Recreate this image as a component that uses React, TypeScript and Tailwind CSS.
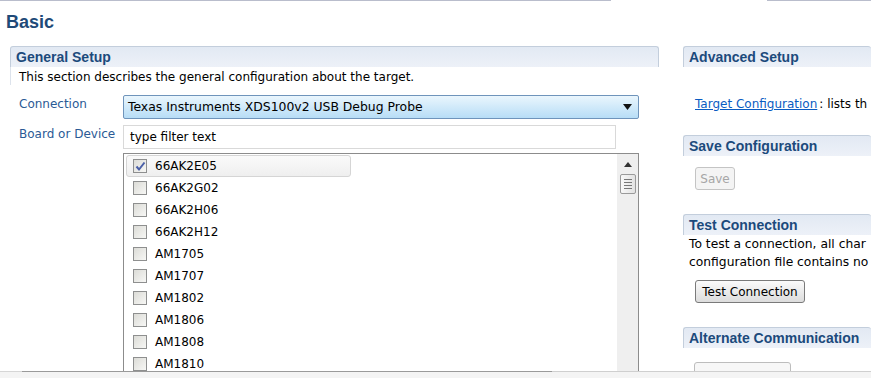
const DEVICES = [
  '66AK2E05',
  '66AK2G02',
  '66AK2H06',
  '66AK2H12',
  'AM1705',
  'AM1707',
  'AM1802',
  'AM1806',
  'AM1808',
  'AM1810',
]

const BODY = { fontFamily: '"DejaVu Sans", Verdana, sans-serif' }
const HEAD = { fontFamily: '"Liberation Sans", Arial, sans-serif' }

function SectionHeader({ title, wide }: { title: string; wide?: boolean }) {
  return (
    <div
      style={HEAD}
      className={
        'h-[21px] rounded-t-[3px] border border-b-0 border-[#c3cedc] bg-gradient-to-b from-[#e2e9f3] to-[#edf1f8] pl-[5px] text-[14px] font-bold leading-[21px] text-[#1c4a7c]' +
        (wide ? '' : ' border-r-0')
      }
    >
      {title}
    </div>
  )
}

function Checkbox({ checked }: { checked?: boolean }) {
  return (
    <span className="flex h-[14px] w-[14px] shrink-0 items-center justify-center border border-[#8e8f8f] bg-gradient-to-br from-[#dcdcd7] to-[#f7f7f5]">
      {checked && (
        <svg width="11" height="11" viewBox="0 0 11 11">
          <path d="M1.5 5.5 L4 8.5 L9.5 1.5" fill="none" stroke="#4a5fa7" strokeWidth="2" />
        </svg>
      )}
    </span>
  )
}

export default function App() {
  return (
    <div className="relative h-[378px] w-[871px] overflow-hidden bg-white text-[12px] text-black" style={BODY}>
      <div className="flex h-px">
        <div className="w-[611px] bg-[#b9bdcc]" />
        <div className="w-[156px]" />
        <div className="flex-1 bg-[#b9bdcc]" />
      </div>
      <div className="pl-[6px] pt-[10px] text-[18px] font-bold leading-[22px] text-[#1f4a78]" style={HEAD}>
        Basic
      </div>

      <div className="mt-[13px] flex">
        {/* left column */}
        <div className="ml-[10px] w-[649px]">
          <SectionHeader title="General Setup" wide />
          <div className="border-l border-[#dde3ec] pl-[8px] pt-[2px] leading-[16px]">
            This section describes the general configuration about the target.
          </div>
          <div className="mt-[10px] flex items-start pl-[9px]">
            <div className="w-[104px] pt-[1px] leading-[16px] text-[#2b5a95]">Connection</div>
            <div className="flex h-[24px] w-[516px] items-center justify-between rounded-[2px] border border-[#6f94bb] bg-gradient-to-b from-[#eaf6fd] to-[#b7ddf6] pl-[4px] pr-[6px] text-[12.4px]">
              <span>Texas Instruments XDS100v2 USB Debug Probe</span>
              <svg width="9" height="6" viewBox="0 0 9 6">
                <path d="M0 0 H9 L4.5 6 Z" fill="#111" />
              </svg>
            </div>
          </div>
          <div className="mt-[6px] flex items-start pl-[9px]">
            <div className="w-[104px] pt-[1px] leading-[16px] text-[#2b5a95]">Board or Device</div>
            <div className="flex h-[24px] w-[493px] items-center border border-[#d9d9d9] pl-[6px]">type filter text</div>
          </div>
          <div className="ml-[113px] mt-[4px] flex h-[220px] w-[516px] border border-b-0 border-[#8c8c8c]">
            <div className="flex-1 pl-[2px] pt-[1px]">
              {DEVICES.map((d, i) => (
                <div
                  key={d}
                  className={
                    'flex h-[22px] w-[225px] items-center gap-[8px] pl-[6px] ' +
                    (i === 0
                      ? 'rounded-[3px] border border-[#d5d5d5] bg-gradient-to-b from-[#fafafa] to-[#efefef]'
                      : 'border border-transparent')
                  }
                >
                  <Checkbox checked={i === 0} />
                  <span>{d}</span>
                </div>
              ))}
            </div>
            <div className="flex w-[21px] flex-col items-center bg-[#efefef] pt-[8px]">
              <svg width="8" height="5" viewBox="0 0 8 5">
                <path d="M0 5 H8 L4 0 Z" fill="#333" />
              </svg>
              <div className="mt-[7px] flex h-[20px] w-[16px] flex-col items-center justify-center gap-[2px] rounded-[2px] border border-[#9a9a9a] bg-gradient-to-r from-[#f8f8f8] to-[#e2e2e2]">
                <span className="h-px w-[8px] bg-[#777]" />
                <span className="h-px w-[8px] bg-[#777]" />
                <span className="h-px w-[8px] bg-[#777]" />
                <span className="h-px w-[8px] bg-[#777]" />
              </div>
            </div>
          </div>
        </div>

        {/* right column */}
        <div className="ml-[24px] w-[188px] shrink-0">
          <SectionHeader title="Advanced Setup" />
          <div className="mt-[29px] whitespace-nowrap pl-[12px] leading-[16px]">
            <span className="text-[#0a5cc2] underline">Target Configuration</span>
            <span className="ml-[2px]">: lists th</span>
          </div>
          <div className="mt-[23px]">
            <SectionHeader title="Save Configuration" />
          </div>
          <div className="pl-[12px] pt-[11px]">
            <div className="flex h-[23px] w-[40px] items-center justify-center rounded-[3px] border border-[#c4c4c4] bg-[#f4f4f4] text-[#a6a6a6]">
              Save
            </div>
          </div>
          <div className="mt-[24px]">
            <SectionHeader title="Test Connection" />
          </div>
          <div className="whitespace-nowrap pl-[6px] text-[12.3px] leading-[18px]">
            <div>To test a connection, all char</div>
            <div>configuration file contains no</div>
          </div>
          <div className="pl-[12px] pt-[9px]">
            <div className="flex h-[23px] w-[110px] items-center justify-center rounded-[3px] border border-[#7a7a7a] bg-gradient-to-b from-[#fbfbfb] to-[#dcdcdc]">
              Test Connection
            </div>
          </div>
          <div className="mt-[24px]">
            <SectionHeader title="Alternate Communication" />
          </div>
          <div className="pl-[11px] pt-[14px]">
            <div className="h-[20px] w-[97px] rounded-t-[3px] border border-[#bdbdbd] bg-[#f7f7f7]" />
          </div>
        </div>
      </div>

      <div className="absolute bottom-0 left-0 right-0 flex h-[7px] flex-col">
        <div className="flex h-px">
          <div className="w-[22px] bg-[#d6d6d6]" />
          <div className="w-[530px] bg-[#9a9a9a]" />
          <div className="flex-1 bg-[#cfcfcf]" />
        </div>
        <div className="flex-1 bg-[#f4f4f4]" />
      </div>
    </div>
  )
}
